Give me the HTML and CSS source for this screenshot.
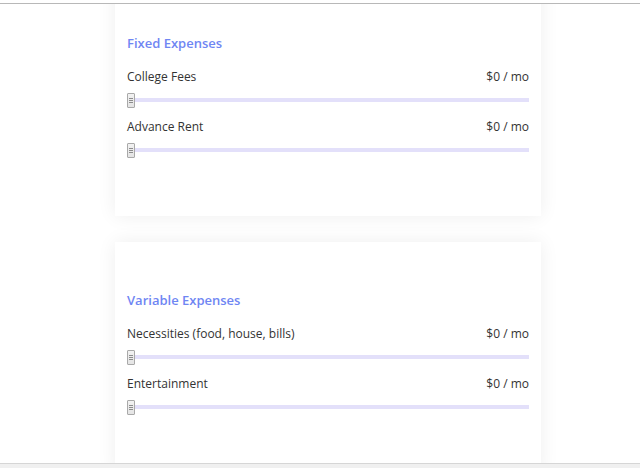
FILE: index.html
```html
<!DOCTYPE html>
<html lang="en">
<head>
<meta charset="utf-8">
<title>Expenses</title>
<link rel="stylesheet" href="styles.css">
</head>
<body>
<div class="top-gap"></div>
<div class="frame">
  <div class="scroller">
    <section class="card">
      <h2 class="card-title">Fixed Expenses</h2>
      <div class="row">
        <div class="row-head"><span class="label">College Fees</span><span class="value">$0 / mo</span></div>
        <input class="slider" type="range" min="0" max="100" value="0">
      </div>
      <div class="row">
        <div class="row-head"><span class="label">Advance Rent</span><span class="value">$0 / mo</span></div>
        <input class="slider" type="range" min="0" max="100" value="0">
      </div>
    </section>
    <section class="card">
      <h2 class="card-title">Variable Expenses</h2>
      <div class="row">
        <div class="row-head"><span class="label">Necessities (food, house, bills)</span><span class="value">$0 / mo</span></div>
        <input class="slider" type="range" min="0" max="100" value="0">
      </div>
      <div class="row">
        <div class="row-head"><span class="label">Entertainment</span><span class="value">$0 / mo</span></div>
        <input class="slider" type="range" min="0" max="100" value="0">
      </div>
    </section>
  </div>
</div>
<div class="bottom-bar"></div>
</body>
</html>
```
FILE: styles.css
```css
* { box-sizing: border-box; }
html, body { margin: 0; padding: 0; background: #ffffff; }
body {
  font-family: "Open Sans", "Noto Sans", sans-serif;
  color: #333333;
  width: 640px;
  height: 468px;
  overflow: hidden;
}
.top-gap { height: 3px; background: #ffffff; }
.frame {
  height: 461px;
  border-top: 1px solid #b8b8b8;
  border-bottom: 1px solid #d6d6d6;
  overflow: hidden;
  background: #ffffff;
}
.bottom-bar { height: 4px; background: #f0f0f0; }
.scroller {
  margin-top: -19px;
  padding-left: 16px;
  display: flex;
  flex-direction: column;
  align-items: center;
  gap: 26px;
}
.card {
  width: 426px;
  background: #ffffff;
  padding: 48px 12px 50px;
  box-shadow: 0 0 18px rgba(0, 0, 0, 0.07);
}
.card-title {
  margin: 0 0 13px;
  font-size: 13px;
  line-height: 20px;
  font-weight: 600;
  color: #6f86f3;
}
.row { margin-bottom: 8px; }
.row-head {
  display: flex;
  justify-content: space-between;
  font-size: 12px;
  line-height: 20px;
  color: #333333;
  padding-top: 1px;
  margin-bottom: 5px;
}
.slider {
  -webkit-appearance: none;
  appearance: none;
  display: block;
  width: 100%;
  height: 16px;
  margin: 0;
  background: transparent;
}
.slider::-webkit-slider-runnable-track {
  height: 4px;
  background: #e3e0fa;
  border: none;
}
.slider::-webkit-slider-thumb {
  -webkit-appearance: none;
  appearance: none;
  width: 8px;
  height: 15px;
  margin-top: -5px;
  border: 1px solid #a9a9a9;
  border-radius: 1px;
  background:
    linear-gradient(#8c8c8c, #8c8c8c) center 4px / 4px 1px no-repeat,
    linear-gradient(#8c8c8c, #8c8c8c) center 6px / 4px 1px no-repeat,
    linear-gradient(#8c8c8c, #8c8c8c) center 8px / 4px 1px no-repeat,
    linear-gradient(#f2f2f2, #e4e4e4);
}
```
